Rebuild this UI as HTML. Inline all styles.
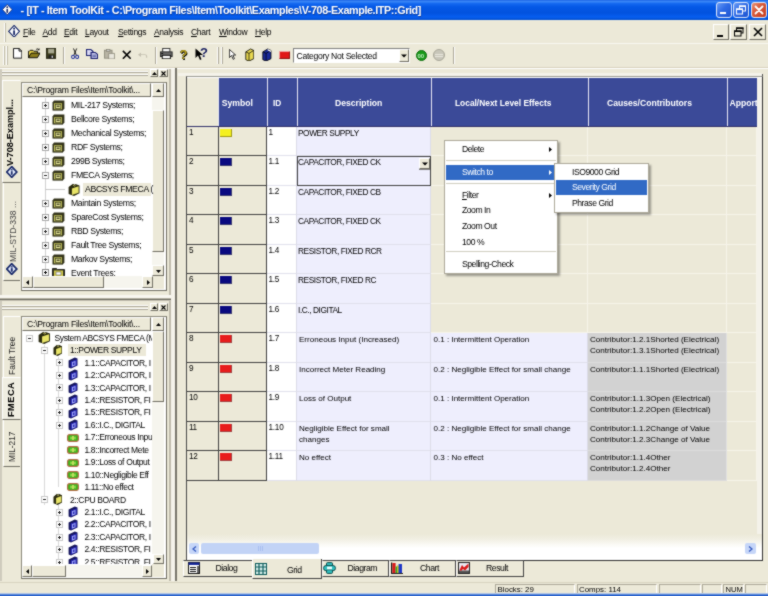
<!DOCTYPE html><html><head><meta charset="utf-8"><title>IT - Item ToolKit</title><style>
*{box-sizing:border-box;margin:0;padding:0}
html,body{width:768px;height:596px;overflow:hidden;background:#ece9d8}
#root{position:absolute;left:0;top:0;width:768px;height:596px;overflow:hidden;background:#ece9d8;filter:url(#soft)}
body{position:relative;font-family:"Liberation Sans",sans-serif;font-size:8px;color:#000}
.a{position:absolute}
.t{position:absolute;white-space:pre;line-height:10px;height:10px}
.b{font-weight:bold}
.rot{position:absolute;white-space:pre;transform-origin:0 0;transform:rotate(-90deg);line-height:10px;height:10px}
.btn{position:absolute;background:#ece9d8;border:1px solid;border-color:#fff #716f64 #716f64 #fff}
.sunk{position:absolute;border:1px solid;border-color:#808080 #fff #fff #808080}
u{text-decoration:underline}
</style></head><body><svg width="0" height="0" style="position:absolute"><filter id="soft" x="0" y="0" width="100%" height="100%" color-interpolation-filters="sRGB"><feConvolveMatrix order="3" kernelMatrix="1 2 1 2 14 2 1 2 1" edgeMode="duplicate" preserveAlpha="false"/></filter></svg><div id="root">
<div class="a" style="left:0;top:0;width:768px;height:20px;background:linear-gradient(#1c64e4 0%,#3a88f8 8%,#1468f0 18%,#0458e6 35%,#0252de 65%,#065ef0 85%,#0450d0 100%)"></div>
<svg class="a" style="left:2px;top:3.8px" width="10.5" height="11.2" viewBox="0 0 13 14"><polygon points="6.5,0.5 12.5,7 6.5,13.5 0.5,7" fill="#fff" stroke="#1a2a6a" stroke-width="1"/><rect x="5.5" y="3" width="2" height="2" fill="#1a2a6a"/><rect x="5.5" y="6" width="2" height="5" fill="#1a2a6a"/></svg>
<div class="t" style="left:20.6px;top:4px;font-size:10.8px;color:#fff;font-weight:bold;line-height:12px;height:12px;text-shadow:0.5px 0.5px 0 #0a3a9a;letter-spacing:-0.405px;">- [IT - Item ToolKit - C:\Program Files\Item\Toolkit\Examples\V-708-Example.ITP::Grid]</div>
<div class="a" style="left:716px;top:2px;width:16px;height:16px;border:1px solid #dfe8fb;border-radius:3px;background:linear-gradient(135deg,#6a9cf5 0%,#2f6be6 45%,#1f55d0 100%)"></div>
<div class="a" style="left:733px;top:2px;width:16px;height:16px;border:1px solid #dfe8fb;border-radius:3px;background:linear-gradient(135deg,#6a9cf5 0%,#2f6be6 45%,#1f55d0 100%)"></div>
<div class="a" style="left:751px;top:2px;width:16px;height:16px;border:1px solid #dfe8fb;border-radius:3px;background:linear-gradient(135deg,#e8957a 0%,#d85a3a 40%,#c63d1d 100%)"></div>
<div class="a" style="left:720px;top:12px;width:6px;height:2px;background:#fff;"></div>
<svg class="a" style="left:736px;top:5px" width="10" height="10" viewBox="0 0 10 10"><rect x="3.5" y="1" width="6" height="5" fill="none" stroke="#fff" stroke-width="1"/><rect x="3" y="0.5" width="7" height="1.5" fill="#fff"/><rect x="0.5" y="4" width="6" height="5" fill="#2f6be6" stroke="#fff" stroke-width="1"/><rect x="0" y="3.5" width="7" height="1.5" fill="#fff"/></svg>
<svg class="a" style="left:754px;top:5px" width="10" height="10" viewBox="0 0 10 10"><path d="M1.5 1.5 L8.5 8.5 M8.5 1.5 L1.5 8.5" stroke="#fff" stroke-width="1.8" stroke-linecap="round"/></svg>
<div class="a" style="left:0px;top:20px;width:768px;height:24px;background:#ece9d8;"></div>
<div class="a" style="left:0px;top:43px;width:768px;height:1px;background:#f8f7f1;"></div>
<div class="a" style="left:4px;top:23px;width:1px;height:19px;background:#fff;"></div>
<div class="a" style="left:5px;top:23px;width:1px;height:19px;background:#c0bca8;"></div>
<svg class="a" style="left:7.6px;top:24.6px" width="12.2" height="12.6" viewBox="0 0 13 14"><polygon points="6.5,0.5 12.5,7 6.5,13.5 0.5,7" fill="#fff" stroke="#1a2a6a" stroke-width="1.3"/><rect x="5.5" y="3" width="2" height="2" fill="#1a2a6a"/><rect x="5.5" y="6" width="2" height="5" fill="#1a2a6a"/></svg>
<div class="t" style="left:23px;top:26.8px;font-size:8.5px;letter-spacing:-0.315px;"><u>F</u>ile</div>
<div class="t" style="left:42.5px;top:26.8px;font-size:8.5px;letter-spacing:-0.315px;"><u>A</u>dd</div>
<div class="t" style="left:64px;top:26.8px;font-size:8.5px;letter-spacing:-0.315px;"><u>E</u>dit</div>
<div class="t" style="left:85px;top:26.8px;font-size:8.5px;letter-spacing:-0.315px;"><u>L</u>ayout</div>
<div class="t" style="left:118px;top:26.8px;font-size:8.5px;letter-spacing:-0.315px;"><u>S</u>ettings</div>
<div class="t" style="left:154px;top:26.8px;font-size:8.5px;letter-spacing:-0.315px;"><u>A</u>nalysis</div>
<div class="t" style="left:191px;top:26.8px;font-size:8.5px;letter-spacing:-0.315px;"><u>C</u>hart</div>
<div class="t" style="left:219px;top:26.8px;font-size:8.5px;letter-spacing:-0.315px;"><u>W</u>indow</div>
<div class="t" style="left:255px;top:26.8px;font-size:8.5px;letter-spacing:-0.315px;"><u>H</u>elp</div>
<div class="btn" style="left:712.6px;top:24px;width:16px;height:15.6px"></div>
<div class="btn" style="left:730.4px;top:24px;width:16.4px;height:15.6px"></div>
<div class="btn" style="left:748.6px;top:24px;width:17.2px;height:15.6px"></div>
<div class="a" style="left:717px;top:35px;width:6px;height:2px;background:#000;"></div>
<svg class="a" style="left:734px;top:27px" width="10" height="10" viewBox="0 0 10 10"><rect x="2.5" y="1" width="6.5" height="5" fill="none" stroke="#000" stroke-width="1"/><rect x="2" y="0.5" width="7.5" height="1.5" fill="#000"/><rect x="0.5" y="4" width="6.5" height="5" fill="#ece9d8" stroke="#000" stroke-width="1"/><rect x="0" y="3.5" width="7.5" height="1.5" fill="#000"/></svg>
<svg class="a" style="left:753px;top:27px" width="10" height="10" viewBox="0 0 10 10"><path d="M1 1 L9 9 M9 1 L1 9" stroke="#000" stroke-width="1.6"/></svg>
<div class="a" style="left:0px;top:44px;width:768px;height:24px;background:#ece9d8;"></div>
<div class="a" style="left:0px;top:67px;width:768px;height:1px;background:#d8d2bd;"></div>
<div class="a" style="left:0px;top:68px;width:768px;height:1px;background:#fff;"></div>
<div class="a" style="left:3px;top:46px;width:1px;height:19px;background:#fff;"></div>
<div class="a" style="left:4px;top:46px;width:1px;height:19px;background:#c0bca8;"></div>
<div class="a" style="left:6px;top:46px;width:1px;height:19px;background:#fff;"></div>
<div class="a" style="left:7px;top:46px;width:1px;height:19px;background:#c0bca8;"></div>
<div class="a" style="left:217px;top:47px;width:1px;height:17px;background:#fff;"></div>
<div class="a" style="left:218px;top:47px;width:1px;height:17px;background:#aca899;"></div>
<div class="a" style="left:221px;top:47px;width:1px;height:17px;background:#fff;"></div>
<div class="a" style="left:222px;top:47px;width:1px;height:17px;background:#aca899;"></div>
<div class="a" style="left:63px;top:47px;width:1px;height:17px;background:#aca899;"></div>
<div class="a" style="left:64px;top:47px;width:1px;height:17px;background:#fff;"></div>
<div class="a" style="left:155px;top:47px;width:1px;height:17px;background:#aca899;"></div>
<div class="a" style="left:156px;top:47px;width:1px;height:17px;background:#fff;"></div>
<div class="a" style="left:453px;top:47px;width:1px;height:17px;background:#aca899;"></div>
<div class="a" style="left:454px;top:47px;width:1px;height:17px;background:#fff;"></div>
<svg class="a" style="left:12.5px;top:48.2px" width="9.3" height="10.6" viewBox="0 0 10 12" preserveAspectRatio="none"><path d="M0.5 0.5 H6.5 L9.5 3.5 V11.5 H0.5 Z" fill="#fff" stroke="#000"/><path d="M6.5 0.5 V3.5 H9.5" fill="none" stroke="#000"/></svg>
<svg class="a" style="left:27.8px;top:48.4px" width="12.5" height="10.2" viewBox="0 0 14 11" preserveAspectRatio="none"><path d="M0.5 10.5 V3.5 H1.5 L2.5 2.5 H5.5 L6.5 3.5 H10.5 V5.5" fill="#e8d24a" stroke="#000"/><path d="M0.5 10.5 L3.5 5.5 H13.5 L10.5 10.5 Z" fill="#8a7a1a" stroke="#000"/><path d="M9 1.5 Q11 0 12.5 2 M12.5 2 l-2 0 m2 0 l0 -1.5" fill="none" stroke="#000" stroke-width=".8"/></svg>
<svg class="a" style="left:45.8px;top:48.3px" width="10.4" height="10.8" viewBox="0 0 12 12" preserveAspectRatio="none"><rect x="0.5" y="0.5" width="11" height="11" fill="#3c3c1c" stroke="#1c1c0c"/><rect x="2.5" y="1" width="7" height="5" fill="#a8a890"/><rect x="3" y="8" width="6" height="3.5" fill="#222"/><rect x="6.5" y="8.5" width="1.5" height="2.5" fill="#ddd"/></svg>
<svg class="a" style="left:70.8px;top:48.3px" width="8.2" height="11.6" viewBox="0 0 10 13" preserveAspectRatio="none"><path d="M3 0.5 L6.5 8 M7 0.5 L3.5 8" stroke="#000" stroke-width="1" fill="none"/><circle cx="2.5" cy="10" r="1.8" fill="none" stroke="#1a2a9a" stroke-width="1.2"/><circle cx="7.5" cy="10" r="1.8" fill="none" stroke="#1a2a9a" stroke-width="1.2"/></svg>
<svg class="a" style="left:86px;top:48.8px" width="12" height="10" viewBox="0 0 13 13" preserveAspectRatio="none"><path d="M0.5 0.5 H5 L7.5 3 V8.5 H0.5 Z" fill="#d8d8f4" stroke="#1a2070" stroke-width="1.3"/><path d="M5.5 4.5 H10 L12.5 7 V12.5 H5.5 Z" fill="#c8c8ee" stroke="#1a2070" stroke-width="1.3"/><path d="M7 8 H11 M7 10 H11" stroke="#1a2a7a" stroke-width=".8"/></svg>
<svg class="a" style="left:103.5px;top:48.8px" width="11" height="10.4" viewBox="0 0 13 13" preserveAspectRatio="none"><rect x="0.5" y="1.5" width="9" height="10" fill="#b8b4a4" stroke="#8a8878"/><rect x="3" y="0.5" width="4" height="2.5" fill="#ccc" stroke="#8a8878"/><path d="M5.5 5.5 H12.5 V12.5 H5.5 Z" fill="#e8e6dc" stroke="#8a8878"/></svg>
<svg class="a" style="left:121.5px;top:49.5px" width="9.6" height="9.6" viewBox="0 0 11 11" preserveAspectRatio="none"><path d="M1 1 L10 10 M10 1 L1 10" stroke="#000" stroke-width="1.8"/></svg>
<svg class="a" style="left:138px;top:51.5px" width="9.5" height="6" viewBox="0 0 11 8" preserveAspectRatio="none"><path d="M1 3.5 H8 Q10 3.5 10 6 V7.5" fill="none" stroke="#c4c0b0" stroke-width="1.3"/><path d="M0 3.5 L3.5 0.5 V6.5 Z" fill="#c4c0b0"/></svg>
<svg class="a" style="left:160.3px;top:48px" width="12.6" height="11.2" viewBox="0 0 14 13" preserveAspectRatio="none"><rect x="3" y="0.5" width="8" height="4.5" fill="#fff" stroke="#222"/><rect x="0.5" y="4.5" width="13" height="5.5" fill="#666" stroke="#222"/><rect x="2.5" y="8.5" width="9" height="4" fill="#fff" stroke="#000"/><rect x="1.5" y="6" width="2" height="1" fill="#000"/></svg>
<div class="t" style="left:179.8px;top:46.5px;font-size:12.5px;color:#b8a018;font-weight:bold;line-height:16px;height:16px;text-shadow:0.6px 0.6px 0 #000,-0.4px -0.4px 0 #000;">?</div>
<svg class="a" style="left:195px;top:48px" width="9" height="13" viewBox="0 0 9 13" preserveAspectRatio="none"><path d="M0.5 0.5 V10 L3 7.5 L5 12 L6.5 11.3 L4.7 7 H8 Z" fill="#000"/></svg>
<div class="t" style="left:200px;top:46px;font-size:13px;color:#1a2060;font-weight:bold;line-height:14px;height:14px;">?</div>
<svg class="a" style="left:229.3px;top:48.8px" width="7.5" height="11.2" viewBox="0 0 9 13" preserveAspectRatio="none"><path d="M0.5 0.5 V10 L3 7.5 L5 12 L6.5 11.3 L4.7 7 H8 Z" fill="#fff" stroke="#000" stroke-width=".9"/></svg>
<svg class="a" style="left:244.6px;top:47.8px" width="9.6" height="13.6" viewBox="0 0 12 14" preserveAspectRatio="none"><path d="M1 4 L7 1 L11 2.5 V11 L5 13.5 L1 12 Z" fill="#e8d850" stroke="#000" stroke-width=".9"/><path d="M1 4 L5 5.5 L11 2.5 M5 5.5 V13.5" fill="none" stroke="#000" stroke-width=".8"/></svg>
<svg class="a" style="left:261.8px;top:47.8px" width="9.8" height="13.6" viewBox="0 0 12 14" preserveAspectRatio="none"><path d="M1 4 L7 1 L11 2.5 V11 L5 13.5 L1 12 Z" fill="#1a2a9a" stroke="#000" stroke-width=".9"/><path d="M1 4 L5 5.5 L11 2.5 M5 5.5 V13.5" fill="none" stroke="#000" stroke-width=".8"/><path d="M7 1 L11 2.5 L11 4 L7 2.5Z" fill="#fff"/></svg>
<div class="a" style="left:279px;top:51.4px;width:11px;height:7.2px;background:#e01818;border:1px solid #f0a0a0;border-right-color:#901010;border-bottom-color:#901010;border-radius:1px"></div>
<div class="a" style="left:293px;top:47.5px;width:117px;height:15.6px;background:#fff;border:1px solid;border-color:#808080 #fff #fff #808080"></div>
<div class="t" style="left:296.5px;top:50.6px;font-size:8.6px;letter-spacing:-0.296px;">Category Not Selected</div>
<div class="btn" style="left:399px;top:49px;width:10px;height:13px"></div>
<svg class="a" style="left:401px;top:54px" width="6" height="4" viewBox="0 0 6 4" preserveAspectRatio="none"><path d="M0 0.5 H6 L3 3.5 Z" fill="#000"/></svg>
<div class="a" style="left:415.8px;top:49.6px;width:11px;height:11px;border-radius:6px;background:#1a9a1a;border:1px solid #0a6a0a"></div>
<div class="t" style="left:417.6px;top:50.6px;font-size:6px;color:#bfe8bf;font-weight:bold;letter-spacing:-0.3px">00</div>
<div class="a" style="left:433px;top:49px;width:12px;height:12px;border-radius:6px;background:#c8c6ba;border:1px solid #a8a698"></div>
<div class="a" style="left:435px;top:54px;width:8px;height:1px;background:#e8e6dc;"></div>
<div class="a" style="left:435px;top:56px;width:8px;height:1px;background:#e8e6dc;"></div>
<div class="a" style="left:0px;top:69px;width:2px;height:512px;background:#cfcbbd;"></div>
<div class="a" style="left:169px;top:69px;width:2px;height:512px;background:#c0bcac;"></div>
<div class="a" style="left:171px;top:69px;width:4px;height:512px;background:#f4f2ea;"></div>
<div class="a" style="left:175px;top:68px;width:2px;height:513px;background:#77756a;"></div>
<div class="a" style="left:0px;top:295px;width:171px;height:3px;background:#f8f6f0;"></div>
<div class="a" style="left:0px;top:298px;width:171px;height:1px;background:#b8b4a4;"></div>
<div class="a" style="left:0px;top:299px;width:171px;height:1px;background:#6e6c62;"></div>
<div class="a" style="left:0px;top:300px;width:171px;height:1px;background:#c8c4b6;"></div>
<div class="a" style="left:2px;top:71px;width:146px;height:1px;background:#fff;"></div>
<div class="a" style="left:2px;top:72px;width:146px;height:1px;background:#aca899;"></div>
<div class="a" style="left:2px;top:74px;width:146px;height:1px;background:#fff;"></div>
<div class="a" style="left:2px;top:75px;width:146px;height:1px;background:#aca899;"></div>
<div class="btn" style="left:150px;top:69px;width:8px;height:8px"></div>
<svg class="a" style="left:151.5px;top:71.5px" width="5" height="3" viewBox="0 0 5 3" preserveAspectRatio="none"><path d="M0 3 L2.5 0 L5 3 Z" fill="#000"/></svg>
<div class="btn" style="left:159px;top:69px;width:9px;height:8px"></div>
<svg class="a" style="left:161px;top:70.5px" width="5" height="5" viewBox="0 0 5 5" preserveAspectRatio="none"><path d="M0.5 0.5 L4.5 4.5 M4.5 0.5 L0.5 4.5" stroke="#000" stroke-width="1.1"/></svg>
<div class="a" style="left:2px;top:80px;width:19px;height:103px;background:#ece9d8;border:1px solid;border-color:#fff transparent #716f64 #fff"></div>
<div class="a" style="left:3px;top:183px;width:17px;height:98px;border-bottom:1px solid #716f64;border-left:1px solid #fff"></div>
<div class="rot b" style="left:5px;top:165.5px;font-size:9.1px;line-height:11px;height:11px">V-708-Exampl...</div>
<svg class="a" style="left:6px;top:166px" width="11.5" height="12" viewBox="0 0 13 15" preserveAspectRatio="none"><polygon points="6.5,0.8 12.2,7.5 6.5,14.2 0.8,7.5" fill="#e8f0ff" stroke="#1a2a6a" stroke-width="2"/><rect x="5.5" y="4" width="2" height="1.6" fill="#1a2a6a"/><rect x="5.5" y="6.5" width="2" height="4.5" fill="#1a2a6a"/></svg>
<div class="rot" style="left:7.5px;top:262px;font-size:8.6px;color:#444">MIL-STD-338 ...</div>
<svg class="a" style="left:6px;top:262.5px" width="11.5" height="12" viewBox="0 0 12 14" preserveAspectRatio="none"><polygon points="6,0.8 11.2,7 6,13.2 0.8,7" fill="#e8f0ff" stroke="#1a2a6a" stroke-width="2"/><rect x="5" y="3.8" width="2" height="1.5" fill="#1a2a6a"/><rect x="5" y="6" width="2" height="4.2" fill="#1a2a6a"/></svg>
<div class="a" style="left:21px;top:82px;width:146px;height:209px;border:1px solid;border-color:#8a887a #6e6c62 #6e6c62 #8a887a;background:#fff"></div>
<div class="btn" style="left:22px;top:83px;width:129px;height:14px"></div>
<div class="t" style="left:27px;top:85.3px;font-size:8.6px;letter-spacing:-0.214px;">C:\Program Files\Item\Toolkit\...</div>
<div class="btn" style="left:152px;top:83px;width:12px;height:14px"></div>
<svg class="a" style="left:155.5px;top:88.5px" width="5" height="3" viewBox="0 0 5 3" preserveAspectRatio="none"><path d="M0 3 L2.5 0 L5 3 Z" fill="#000"/></svg>
<div class="a" style="left:152px;top:97px;width:12px;height:168px;background:#f6f5ee;"></div>
<div class="btn" style="left:152px;top:110px;width:12px;height:142px"></div>
<div class="btn" style="left:152px;top:265px;width:12px;height:11px"></div>
<svg class="a" style="left:155.5px;top:269.5px" width="5" height="3" viewBox="0 0 5 3" preserveAspectRatio="none"><path d="M0 0 L5 0 L2.5 3 Z" fill="#000"/></svg>
<div class="a" style="left:45px;top:98px;width:1px;height:178px;background:#d0d0d0;"></div>
<div class="a" style="left:42px;top:102px;width:7px;height:7px;background:#fff;border:1px solid #a8a8a8"></div>
<div class="a" style="left:44px;top:105px;width:3px;height:1px;background:#222;"></div>
<div class="a" style="left:45px;top:104px;width:1px;height:3px;background:#222;"></div>
<svg class="a" style="left:52px;top:100.25px" width="13" height="11" viewBox="0 0 13 11" preserveAspectRatio="none"><path d="M0.5 2.5 L2 0.6 H12.4 V8.5 L10.8 10.5 H0.5 Z" fill="#33331a"/><rect x="1.6" y="2.8" width="9" height="7" fill="#c4c45c" stroke="#2a2a14" stroke-width=".8"/><rect x="3.4" y="4.3" width="5.4" height="4" fill="#f0f0a0" stroke="#3a3a20" stroke-width=".7"/><rect x="4.6" y="5.6" width="3" height="1.3" fill="#3a3a20"/></svg>
<div class="t" style="left:71px;top:100.45px;font-size:8.7px;letter-spacing:-0.369px;">MIL-217 Systems;</div>
<div class="a" style="left:42px;top:116px;width:7px;height:7px;background:#fff;border:1px solid #a8a8a8"></div>
<div class="a" style="left:44px;top:119px;width:3px;height:1px;background:#222;"></div>
<div class="a" style="left:45px;top:118px;width:1px;height:3px;background:#222;"></div>
<svg class="a" style="left:52px;top:114.19px" width="13" height="11" viewBox="0 0 13 11" preserveAspectRatio="none"><path d="M0.5 2.5 L2 0.6 H12.4 V8.5 L10.8 10.5 H0.5 Z" fill="#33331a"/><rect x="1.6" y="2.8" width="9" height="7" fill="#c4c45c" stroke="#2a2a14" stroke-width=".8"/><rect x="3.4" y="4.3" width="5.4" height="4" fill="#f0f0a0" stroke="#3a3a20" stroke-width=".7"/><rect x="4.6" y="5.6" width="3" height="1.3" fill="#3a3a20"/></svg>
<div class="t" style="left:71px;top:114.39px;font-size:8.7px;letter-spacing:-0.369px;">Bellcore Systems;</div>
<div class="a" style="left:42px;top:130px;width:7px;height:7px;background:#fff;border:1px solid #a8a8a8"></div>
<div class="a" style="left:44px;top:133px;width:3px;height:1px;background:#222;"></div>
<div class="a" style="left:45px;top:132px;width:1px;height:3px;background:#222;"></div>
<svg class="a" style="left:52px;top:128.13px" width="13" height="11" viewBox="0 0 13 11" preserveAspectRatio="none"><path d="M0.5 2.5 L2 0.6 H12.4 V8.5 L10.8 10.5 H0.5 Z" fill="#33331a"/><rect x="1.6" y="2.8" width="9" height="7" fill="#c4c45c" stroke="#2a2a14" stroke-width=".8"/><rect x="3.4" y="4.3" width="5.4" height="4" fill="#f0f0a0" stroke="#3a3a20" stroke-width=".7"/><rect x="4.6" y="5.6" width="3" height="1.3" fill="#3a3a20"/></svg>
<div class="t" style="left:71px;top:128.32999999999998px;font-size:8.7px;letter-spacing:-0.369px;">Mechanical Systems;</div>
<div class="a" style="left:42px;top:144px;width:7px;height:7px;background:#fff;border:1px solid #a8a8a8"></div>
<div class="a" style="left:44px;top:147px;width:3px;height:1px;background:#222;"></div>
<div class="a" style="left:45px;top:146px;width:1px;height:3px;background:#222;"></div>
<svg class="a" style="left:52px;top:142.07px" width="13" height="11" viewBox="0 0 13 11" preserveAspectRatio="none"><path d="M0.5 2.5 L2 0.6 H12.4 V8.5 L10.8 10.5 H0.5 Z" fill="#33331a"/><rect x="1.6" y="2.8" width="9" height="7" fill="#c4c45c" stroke="#2a2a14" stroke-width=".8"/><rect x="3.4" y="4.3" width="5.4" height="4" fill="#f0f0a0" stroke="#3a3a20" stroke-width=".7"/><rect x="4.6" y="5.6" width="3" height="1.3" fill="#3a3a20"/></svg>
<div class="t" style="left:71px;top:142.26999999999998px;font-size:8.7px;letter-spacing:-0.369px;">RDF Systems;</div>
<div class="a" style="left:42px;top:158px;width:7px;height:7px;background:#fff;border:1px solid #a8a8a8"></div>
<div class="a" style="left:44px;top:161px;width:3px;height:1px;background:#222;"></div>
<div class="a" style="left:45px;top:160px;width:1px;height:3px;background:#222;"></div>
<svg class="a" style="left:52px;top:156.01px" width="13" height="11" viewBox="0 0 13 11" preserveAspectRatio="none"><path d="M0.5 2.5 L2 0.6 H12.4 V8.5 L10.8 10.5 H0.5 Z" fill="#33331a"/><rect x="1.6" y="2.8" width="9" height="7" fill="#c4c45c" stroke="#2a2a14" stroke-width=".8"/><rect x="3.4" y="4.3" width="5.4" height="4" fill="#f0f0a0" stroke="#3a3a20" stroke-width=".7"/><rect x="4.6" y="5.6" width="3" height="1.3" fill="#3a3a20"/></svg>
<div class="t" style="left:71px;top:156.20999999999998px;font-size:8.7px;letter-spacing:-0.369px;">299B Systems;</div>
<div class="a" style="left:42px;top:172px;width:7px;height:7px;background:#fff;border:1px solid #a8a8a8"></div>
<div class="a" style="left:44px;top:175px;width:3px;height:1px;background:#222;"></div>
<svg class="a" style="left:52px;top:169.95px" width="13" height="11" viewBox="0 0 13 11" preserveAspectRatio="none"><path d="M0.5 2.5 L2 0.6 H12.4 V8.5 L10.8 10.5 H0.5 Z" fill="#33331a"/><rect x="1.6" y="2.8" width="9" height="7" fill="#c4c45c" stroke="#2a2a14" stroke-width=".8"/><rect x="3.4" y="4.3" width="5.4" height="4" fill="#f0f0a0" stroke="#3a3a20" stroke-width=".7"/><rect x="4.6" y="5.6" width="3" height="1.3" fill="#3a3a20"/></svg>
<div class="t" style="left:71px;top:170.14999999999998px;font-size:8.7px;letter-spacing:-0.369px;">FMECA Systems;</div>
<div class="a" style="left:45px;top:189px;width:20px;height:1px;background:#c8c8c8;"></div>
<div class="a" style="left:83px;top:183px;width:68px;height:13px;background:#ece9d8;"></div>
<svg class="a" style="left:67.5px;top:182.58999999999997px" width="12" height="13.5" viewBox="0 0 12 13" preserveAspectRatio="none"><path d="M0.6 3.8 L5 0.8 L6.6 1.7 L7.4 0.9 L11.5 2.4 V9.8 L6 12.5 L0.6 10.6 Z" fill="#2a2a10"/><path d="M3.9 5.2 L10.6 3.1 V9.3 L3.9 11.5 Z" fill="#e8e468"/><path d="M5 2 L6.6 2.9 L7.6 2 " fill="none" stroke="#e8e468" stroke-width=".7"/></svg>
<div class="t" style="left:85px;top:184.08999999999997px;font-size:8.7px;letter-spacing:-0.346px;">ABCSYS FMECA (</div>
<div class="a" style="left:42px;top:200px;width:7px;height:7px;background:#fff;border:1px solid #a8a8a8"></div>
<div class="a" style="left:44px;top:203px;width:3px;height:1px;background:#222;"></div>
<div class="a" style="left:45px;top:202px;width:1px;height:3px;background:#222;"></div>
<svg class="a" style="left:52px;top:197.82999999999998px" width="13" height="11" viewBox="0 0 13 11" preserveAspectRatio="none"><path d="M0.5 2.5 L2 0.6 H12.4 V8.5 L10.8 10.5 H0.5 Z" fill="#33331a"/><rect x="1.6" y="2.8" width="9" height="7" fill="#c4c45c" stroke="#2a2a14" stroke-width=".8"/><rect x="3.4" y="4.3" width="5.4" height="4" fill="#f0f0a0" stroke="#3a3a20" stroke-width=".7"/><rect x="4.6" y="5.6" width="3" height="1.3" fill="#3a3a20"/></svg>
<div class="t" style="left:71px;top:198.02999999999997px;font-size:8.7px;letter-spacing:-0.369px;">Maintain Systems;</div>
<div class="a" style="left:42px;top:214px;width:7px;height:7px;background:#fff;border:1px solid #a8a8a8"></div>
<div class="a" style="left:44px;top:217px;width:3px;height:1px;background:#222;"></div>
<div class="a" style="left:45px;top:216px;width:1px;height:3px;background:#222;"></div>
<svg class="a" style="left:52px;top:211.76999999999998px" width="13" height="11" viewBox="0 0 13 11" preserveAspectRatio="none"><path d="M0.5 2.5 L2 0.6 H12.4 V8.5 L10.8 10.5 H0.5 Z" fill="#33331a"/><rect x="1.6" y="2.8" width="9" height="7" fill="#c4c45c" stroke="#2a2a14" stroke-width=".8"/><rect x="3.4" y="4.3" width="5.4" height="4" fill="#f0f0a0" stroke="#3a3a20" stroke-width=".7"/><rect x="4.6" y="5.6" width="3" height="1.3" fill="#3a3a20"/></svg>
<div class="t" style="left:71px;top:211.96999999999997px;font-size:8.7px;letter-spacing:-0.369px;">SpareCost Systems;</div>
<div class="a" style="left:42px;top:228px;width:7px;height:7px;background:#fff;border:1px solid #a8a8a8"></div>
<div class="a" style="left:44px;top:231px;width:3px;height:1px;background:#222;"></div>
<div class="a" style="left:45px;top:230px;width:1px;height:3px;background:#222;"></div>
<svg class="a" style="left:52px;top:225.70999999999998px" width="13" height="11" viewBox="0 0 13 11" preserveAspectRatio="none"><path d="M0.5 2.5 L2 0.6 H12.4 V8.5 L10.8 10.5 H0.5 Z" fill="#33331a"/><rect x="1.6" y="2.8" width="9" height="7" fill="#c4c45c" stroke="#2a2a14" stroke-width=".8"/><rect x="3.4" y="4.3" width="5.4" height="4" fill="#f0f0a0" stroke="#3a3a20" stroke-width=".7"/><rect x="4.6" y="5.6" width="3" height="1.3" fill="#3a3a20"/></svg>
<div class="t" style="left:71px;top:225.90999999999997px;font-size:8.7px;letter-spacing:-0.369px;">RBD Systems;</div>
<div class="a" style="left:42px;top:242px;width:7px;height:7px;background:#fff;border:1px solid #a8a8a8"></div>
<div class="a" style="left:44px;top:245px;width:3px;height:1px;background:#222;"></div>
<div class="a" style="left:45px;top:244px;width:1px;height:3px;background:#222;"></div>
<svg class="a" style="left:52px;top:239.65px" width="13" height="11" viewBox="0 0 13 11" preserveAspectRatio="none"><path d="M0.5 2.5 L2 0.6 H12.4 V8.5 L10.8 10.5 H0.5 Z" fill="#33331a"/><rect x="1.6" y="2.8" width="9" height="7" fill="#c4c45c" stroke="#2a2a14" stroke-width=".8"/><rect x="3.4" y="4.3" width="5.4" height="4" fill="#f0f0a0" stroke="#3a3a20" stroke-width=".7"/><rect x="4.6" y="5.6" width="3" height="1.3" fill="#3a3a20"/></svg>
<div class="t" style="left:71px;top:239.85px;font-size:8.7px;letter-spacing:-0.369px;">Fault Tree Systems;</div>
<div class="a" style="left:42px;top:256px;width:7px;height:7px;background:#fff;border:1px solid #a8a8a8"></div>
<div class="a" style="left:44px;top:259px;width:3px;height:1px;background:#222;"></div>
<div class="a" style="left:45px;top:258px;width:1px;height:3px;background:#222;"></div>
<svg class="a" style="left:52px;top:253.59000000000003px" width="13" height="11" viewBox="0 0 13 11" preserveAspectRatio="none"><path d="M0.5 2.5 L2 0.6 H12.4 V8.5 L10.8 10.5 H0.5 Z" fill="#33331a"/><rect x="1.6" y="2.8" width="9" height="7" fill="#c4c45c" stroke="#2a2a14" stroke-width=".8"/><rect x="3.4" y="4.3" width="5.4" height="4" fill="#f0f0a0" stroke="#3a3a20" stroke-width=".7"/><rect x="4.6" y="5.6" width="3" height="1.3" fill="#3a3a20"/></svg>
<div class="t" style="left:71px;top:253.79000000000002px;font-size:8.7px;letter-spacing:-0.369px;">Markov Systems;</div>
<div class="a" style="left:40px;top:266.03px;width:111px;height:9.970000000000027px;overflow:hidden">
<div class="a" style="left:2px;top:3px;width:7px;height:7px;background:#fff;border:1px solid #8a8a8a"></div><div class="a" style="left:4px;top:6px;width:3px;height:1px;background:#000"></div><div class="a" style="left:5px;top:5px;width:1px;height:3px;background:#000"></div>
<svg class="a" style="left:12px;top:1px" width="13" height="11" viewBox="0 0 13 11"><path d="M0.5 10.5 V1.5 H4.5 L5.5 2.5 H12.5 V10.5 Z" fill="#3a3a20" stroke="#222"/><rect x="2" y="3.5" width="9" height="6" fill="#d8d050"/><rect x="4" y="5" width="5" height="3" fill="#fff" stroke="#555" stroke-width=".6"/></svg>
<div class="t" style="left:31px;top:1.8px;font-size:8.5px;letter-spacing:-0.27px">Event Trees;</div></div>
<div class="a" style="left:22px;top:276px;width:142px;height:12px;background:#f6f5ee;"></div>
<div class="btn" style="left:22px;top:276px;width:11px;height:12px"></div>
<svg class="a" style="left:26px;top:279.5px" width="3" height="5" viewBox="0 0 3 5" preserveAspectRatio="none"><path d="M3 0 L3 5 L0 2.5 Z" fill="#000"/></svg>
<div class="btn" style="left:33px;top:276px;width:71px;height:12px"></div>
<div class="btn" style="left:142px;top:276px;width:11px;height:12px"></div>
<svg class="a" style="left:146.5px;top:279.5px" width="3" height="5" viewBox="0 0 3 5" preserveAspectRatio="none"><path d="M0 0 L0 5 L3 2.5 Z" fill="#000"/></svg>
<div class="a" style="left:153px;top:276px;width:11px;height:13px;background:#ece9d8;"></div>
<div class="a" style="left:2px;top:305px;width:146px;height:1px;background:#fff;"></div>
<div class="a" style="left:2px;top:306px;width:146px;height:1px;background:#aca899;"></div>
<div class="a" style="left:2px;top:308px;width:146px;height:1px;background:#fff;"></div>
<div class="a" style="left:2px;top:309px;width:146px;height:1px;background:#aca899;"></div>
<div class="btn" style="left:150px;top:303px;width:8px;height:8px"></div>
<svg class="a" style="left:151.5px;top:305.5px" width="5" height="3" viewBox="0 0 5 3" preserveAspectRatio="none"><path d="M0 3 L2.5 0 L5 3 Z" fill="#000"/></svg>
<div class="btn" style="left:159px;top:303px;width:9px;height:8px"></div>
<svg class="a" style="left:161px;top:304.5px" width="5" height="5" viewBox="0 0 5 5" preserveAspectRatio="none"><path d="M0.5 0.5 L4.5 4.5 M4.5 0.5 L0.5 4.5" stroke="#000" stroke-width="1.1"/></svg>
<div class="a" style="left:3px;top:316px;width:17px;height:61px;border-left:1px solid #fff;border-top:1px solid #fff"></div>
<div class="rot" style="left:7px;top:374.5px;font-size:8.5px;color:#222">Fault Tree</div>
<div class="a" style="left:2px;top:377px;width:19px;height:43px;background:#f0eee2;border:1px solid;border-color:#fff transparent #716f64 #fff"></div>
<div class="rot b" style="left:6px;top:417px;font-size:9.2px;letter-spacing:0.5px;line-height:11px;height:11px">FMECA</div>
<div class="a" style="left:3px;top:420px;width:17px;height:47px;border-left:1px solid #fff;border-bottom:1px solid #716f64"></div>
<div class="rot" style="left:7px;top:461.5px;font-size:8.3px;color:#222">MIL-217</div>
<div class="a" style="left:21px;top:316px;width:146px;height:263px;border:1px solid;border-color:#8a887a #6e6c62 #6e6c62 #8a887a;background:#fff"></div>
<div class="btn" style="left:22px;top:317px;width:129px;height:14px"></div>
<div class="t" style="left:27px;top:319.3px;font-size:8.6px;letter-spacing:-0.214px;">C:\Program Files\Item\Toolkit\...</div>
<div class="btn" style="left:152px;top:317px;width:12px;height:14px"></div>
<svg class="a" style="left:155.5px;top:322.5px" width="5" height="3" viewBox="0 0 5 3" preserveAspectRatio="none"><path d="M0 3 L2.5 0 L5 3 Z" fill="#000"/></svg>
<div class="a" style="left:152px;top:331px;width:12px;height:223px;background:#f6f5ee;"></div>
<div class="btn" style="left:152px;top:331px;width:12px;height:71px"></div>
<div class="btn" style="left:153px;top:554px;width:11px;height:10px"></div>
<svg class="a" style="left:156px;top:557.5px" width="5" height="3" viewBox="0 0 5 3" preserveAspectRatio="none"><path d="M0 0 L5 0 L2.5 3 Z" fill="#000"/></svg>
<div class="a" style="left:22px;top:331px;width:130px;height:233px;overflow:hidden">
<div class="a" style="left:22px;top:14px;width:1px;height:160px;background:#d8d8d8;"></div>
<div class="a" style="left:36px;top:26px;width:1px;height:130px;background:#d8d8d8;"></div>
<div class="a" style="left:36px;top:174px;width:1px;height:60px;background:#d8d8d8;"></div>
<div class="a" style="left:4px;top:4px;width:7px;height:7px;background:#fff;border:1px solid #c8c8c8"></div>
<div class="a" style="left:6px;top:7px;width:3px;height:1px;background:#222;"></div>
<svg class="a" style="left:15.5px;top:0.20000000000000018px" width="12.5" height="13.5" viewBox="0 0 12 13" preserveAspectRatio="none"><path d="M0.6 3.8 L5 0.8 L6.6 1.7 L7.4 0.9 L11.5 2.4 V9.8 L6 12.5 L0.6 10.6 Z" fill="#2a2a10"/><path d="M3.9 5.2 L10.6 3.1 V9.3 L3.9 11.5 Z" fill="#e8e468"/><path d="M5 2 L6.6 2.9 L7.6 2 " fill="none" stroke="#e8e468" stroke-width=".7"/></svg>
<div class="t" style="left:32.5px;top:1.7000000000000002px;font-size:8.5px;letter-spacing:-0.360px;">System ABCSYS FMECA (M</div>
<div class="a" style="left:19px;top:16px;width:7px;height:7px;background:#fff;border:1px solid #c8c8c8"></div>
<div class="a" style="left:21px;top:19px;width:3px;height:1px;background:#222;"></div>
<svg class="a" style="left:30.5px;top:13.049999999999988px" width="9.5" height="12.5" viewBox="0 0 12 13" preserveAspectRatio="none"><path d="M0.6 3.8 L5 0.8 L6.6 1.7 L7.4 0.9 L11.5 2.4 V9.8 L6 12.5 L0.6 10.6 Z" fill="#2a2a10"/><path d="M3.9 5.2 L10.6 3.1 V9.3 L3.9 11.5 Z" fill="#e8e468"/><path d="M5 2 L6.6 2.9 L7.6 2 " fill="none" stroke="#e8e468" stroke-width=".7"/></svg>
<div class="a" style="left:46px;top:13.449999999999989px;width:78px;height:12px;background:#ece9d8;"></div>
<div class="t" style="left:48px;top:14.149999999999988px;font-size:8.5px;letter-spacing:-0.360px;">1::POWER SUPPLY</div>
<div class="a" style="left:34px;top:28px;width:7px;height:7px;background:#fff;border:1px solid #c8c8c8"></div>
<div class="a" style="left:36px;top:31px;width:3px;height:1px;background:#222;"></div>
<div class="a" style="left:37px;top:30px;width:1px;height:3px;background:#222;"></div>
<svg class="a" style="left:46.0px;top:25.899999999999977px" width="10" height="12" viewBox="0 0 10 12" preserveAspectRatio="none"><path d="M0.6 3.6 L6.8 0.6 L9.5 1.6 V8.6 L3 11.6 L0.6 10.4 Z" fill="#14145a"/><path d="M2.6 4.6 L8.8 2.2 V8.2 L2.6 10.8 Z" fill="#2828b4"/><rect x="4.4" y="5" width="2.6" height="3.4" fill="none" stroke="#b0b8ff" stroke-width=".9" transform="skewY(-20) translate(0,2.1)"/></svg>
<div class="t" style="left:62.5px;top:26.599999999999977px;font-size:8.5px;letter-spacing:-0.360px;">1.1::CAPACITOR, I</div>
<div class="a" style="left:34px;top:41px;width:7px;height:7px;background:#fff;border:1px solid #c8c8c8"></div>
<div class="a" style="left:36px;top:44px;width:3px;height:1px;background:#222;"></div>
<div class="a" style="left:37px;top:43px;width:1px;height:3px;background:#222;"></div>
<svg class="a" style="left:46.0px;top:38.35000000000002px" width="10" height="12" viewBox="0 0 10 12" preserveAspectRatio="none"><path d="M0.6 3.6 L6.8 0.6 L9.5 1.6 V8.6 L3 11.6 L0.6 10.4 Z" fill="#14145a"/><path d="M2.6 4.6 L8.8 2.2 V8.2 L2.6 10.8 Z" fill="#2828b4"/><rect x="4.4" y="5" width="2.6" height="3.4" fill="none" stroke="#b0b8ff" stroke-width=".9" transform="skewY(-20) translate(0,2.1)"/></svg>
<div class="t" style="left:62.5px;top:39.050000000000026px;font-size:8.5px;letter-spacing:-0.360px;">1.2::CAPACITOR, I</div>
<div class="a" style="left:34px;top:53px;width:7px;height:7px;background:#fff;border:1px solid #c8c8c8"></div>
<div class="a" style="left:36px;top:56px;width:3px;height:1px;background:#222;"></div>
<div class="a" style="left:37px;top:55px;width:1px;height:3px;background:#222;"></div>
<svg class="a" style="left:46.0px;top:50.80000000000001px" width="10" height="12" viewBox="0 0 10 12" preserveAspectRatio="none"><path d="M0.6 3.6 L6.8 0.6 L9.5 1.6 V8.6 L3 11.6 L0.6 10.4 Z" fill="#14145a"/><path d="M2.6 4.6 L8.8 2.2 V8.2 L2.6 10.8 Z" fill="#2828b4"/><rect x="4.4" y="5" width="2.6" height="3.4" fill="none" stroke="#b0b8ff" stroke-width=".9" transform="skewY(-20) translate(0,2.1)"/></svg>
<div class="t" style="left:62.5px;top:51.500000000000014px;font-size:8.5px;letter-spacing:-0.360px;">1.3::CAPACITOR, I</div>
<div class="a" style="left:34px;top:66px;width:7px;height:7px;background:#fff;border:1px solid #c8c8c8"></div>
<div class="a" style="left:36px;top:69px;width:3px;height:1px;background:#222;"></div>
<div class="a" style="left:37px;top:68px;width:1px;height:3px;background:#222;"></div>
<svg class="a" style="left:46.0px;top:63.25px" width="10" height="12" viewBox="0 0 10 12" preserveAspectRatio="none"><path d="M0.6 3.6 L6.8 0.6 L9.5 1.6 V8.6 L3 11.6 L0.6 10.4 Z" fill="#14145a"/><path d="M2.6 4.6 L8.8 2.2 V8.2 L2.6 10.8 Z" fill="#2828b4"/><rect x="4.4" y="5" width="2.6" height="3.4" fill="none" stroke="#b0b8ff" stroke-width=".9" transform="skewY(-20) translate(0,2.1)"/></svg>
<div class="t" style="left:62.5px;top:63.95px;font-size:8.5px;letter-spacing:-0.360px;">1.4::RESISTOR, FI</div>
<div class="a" style="left:34px;top:78px;width:7px;height:7px;background:#fff;border:1px solid #c8c8c8"></div>
<div class="a" style="left:36px;top:81px;width:3px;height:1px;background:#222;"></div>
<div class="a" style="left:37px;top:80px;width:1px;height:3px;background:#222;"></div>
<svg class="a" style="left:46.0px;top:75.69999999999999px" width="10" height="12" viewBox="0 0 10 12" preserveAspectRatio="none"><path d="M0.6 3.6 L6.8 0.6 L9.5 1.6 V8.6 L3 11.6 L0.6 10.4 Z" fill="#14145a"/><path d="M2.6 4.6 L8.8 2.2 V8.2 L2.6 10.8 Z" fill="#2828b4"/><rect x="4.4" y="5" width="2.6" height="3.4" fill="none" stroke="#b0b8ff" stroke-width=".9" transform="skewY(-20) translate(0,2.1)"/></svg>
<div class="t" style="left:62.5px;top:76.39999999999999px;font-size:8.5px;letter-spacing:-0.360px;">1.5::RESISTOR, FI</div>
<div class="a" style="left:34px;top:91px;width:7px;height:7px;background:#fff;border:1px solid #c8c8c8"></div>
<div class="a" style="left:36px;top:94px;width:3px;height:1px;background:#222;"></div>
<div class="a" style="left:37px;top:93px;width:1px;height:3px;background:#222;"></div>
<svg class="a" style="left:46.0px;top:88.14999999999998px" width="10" height="12" viewBox="0 0 10 12" preserveAspectRatio="none"><path d="M0.6 3.6 L6.8 0.6 L9.5 1.6 V8.6 L3 11.6 L0.6 10.4 Z" fill="#14145a"/><path d="M2.6 4.6 L8.8 2.2 V8.2 L2.6 10.8 Z" fill="#2828b4"/><rect x="4.4" y="5" width="2.6" height="3.4" fill="none" stroke="#b0b8ff" stroke-width=".9" transform="skewY(-20) translate(0,2.1)"/></svg>
<div class="t" style="left:62.5px;top:88.84999999999998px;font-size:8.5px;letter-spacing:-0.360px;">1.6::I.C., DIGITAL</div>
<svg class="a" style="left:44.5px;top:102.60000000000002px" width="12" height="8" viewBox="0 0 12 8" preserveAspectRatio="none"><rect x="0.6" y="0.6" width="10.8" height="6.8" rx="1.8" fill="#3cb41c" stroke="#b86a48" stroke-width="1.2"/><rect x="3" y="2.2" width="6" height="3.6" fill="#58c830"/><rect x="5.3" y="2" width="1.4" height="4" fill="#e0ec70"/><rect x="3.2" y="3.5" width="5.6" height="1" fill="#c8e060"/></svg>
<div class="t" style="left:62.5px;top:101.30000000000003px;font-size:8.5px;letter-spacing:-0.360px;">1.7::Erroneous Inpu</div>
<svg class="a" style="left:44.5px;top:115.05000000000001px" width="12" height="8" viewBox="0 0 12 8" preserveAspectRatio="none"><rect x="0.6" y="0.6" width="10.8" height="6.8" rx="1.8" fill="#3cb41c" stroke="#b86a48" stroke-width="1.2"/><rect x="3" y="2.2" width="6" height="3.6" fill="#58c830"/><rect x="5.3" y="2" width="1.4" height="4" fill="#e0ec70"/><rect x="3.2" y="3.5" width="5.6" height="1" fill="#c8e060"/></svg>
<div class="t" style="left:62.5px;top:113.75000000000001px;font-size:8.5px;letter-spacing:-0.360px;">1.8::Incorrect Mete</div>
<svg class="a" style="left:44.5px;top:127.5px" width="12" height="8" viewBox="0 0 12 8" preserveAspectRatio="none"><rect x="0.6" y="0.6" width="10.8" height="6.8" rx="1.8" fill="#3cb41c" stroke="#b86a48" stroke-width="1.2"/><rect x="3" y="2.2" width="6" height="3.6" fill="#58c830"/><rect x="5.3" y="2" width="1.4" height="4" fill="#e0ec70"/><rect x="3.2" y="3.5" width="5.6" height="1" fill="#c8e060"/></svg>
<div class="t" style="left:62.5px;top:126.2px;font-size:8.5px;letter-spacing:-0.360px;">1.9::Loss of Output</div>
<svg class="a" style="left:44.5px;top:139.95px" width="12" height="8" viewBox="0 0 12 8" preserveAspectRatio="none"><rect x="0.6" y="0.6" width="10.8" height="6.8" rx="1.8" fill="#3cb41c" stroke="#b86a48" stroke-width="1.2"/><rect x="3" y="2.2" width="6" height="3.6" fill="#58c830"/><rect x="5.3" y="2" width="1.4" height="4" fill="#e0ec70"/><rect x="3.2" y="3.5" width="5.6" height="1" fill="#c8e060"/></svg>
<div class="t" style="left:62.5px;top:138.64999999999998px;font-size:8.5px;letter-spacing:-0.360px;">1.10::Negligible Eff</div>
<svg class="a" style="left:44.5px;top:152.39999999999998px" width="12" height="8" viewBox="0 0 12 8" preserveAspectRatio="none"><rect x="0.6" y="0.6" width="10.8" height="6.8" rx="1.8" fill="#3cb41c" stroke="#b86a48" stroke-width="1.2"/><rect x="3" y="2.2" width="6" height="3.6" fill="#58c830"/><rect x="5.3" y="2" width="1.4" height="4" fill="#e0ec70"/><rect x="3.2" y="3.5" width="5.6" height="1" fill="#c8e060"/></svg>
<div class="t" style="left:62.5px;top:151.09999999999997px;font-size:8.5px;letter-spacing:-0.360px;">1.11::No effect</div>
<div class="a" style="left:19px;top:165px;width:7px;height:7px;background:#fff;border:1px solid #c8c8c8"></div>
<div class="a" style="left:21px;top:168px;width:3px;height:1px;background:#222;"></div>
<svg class="a" style="left:30.5px;top:162.45000000000002px" width="9.5" height="12.5" viewBox="0 0 12 13" preserveAspectRatio="none"><path d="M0.6 3.8 L5 0.8 L6.6 1.7 L7.4 0.9 L11.5 2.4 V9.8 L6 12.5 L0.6 10.6 Z" fill="#2a2a10"/><path d="M3.9 5.2 L10.6 3.1 V9.3 L3.9 11.5 Z" fill="#e8e468"/><path d="M5 2 L6.6 2.9 L7.6 2 " fill="none" stroke="#e8e468" stroke-width=".7"/></svg>
<div class="t" style="left:48px;top:163.55px;font-size:8.5px;letter-spacing:-0.360px;">2::CPU BOARD</div>
<div class="a" style="left:34px;top:178px;width:7px;height:7px;background:#fff;border:1px solid #c8c8c8"></div>
<div class="a" style="left:36px;top:181px;width:3px;height:1px;background:#222;"></div>
<div class="a" style="left:37px;top:180px;width:1px;height:3px;background:#222;"></div>
<svg class="a" style="left:46.0px;top:175.29999999999995px" width="10" height="12" viewBox="0 0 10 12" preserveAspectRatio="none"><path d="M0.6 3.6 L6.8 0.6 L9.5 1.6 V8.6 L3 11.6 L0.6 10.4 Z" fill="#14145a"/><path d="M2.6 4.6 L8.8 2.2 V8.2 L2.6 10.8 Z" fill="#2828b4"/><rect x="4.4" y="5" width="2.6" height="3.4" fill="none" stroke="#b0b8ff" stroke-width=".9" transform="skewY(-20) translate(0,2.1)"/></svg>
<div class="t" style="left:62.5px;top:175.99999999999994px;font-size:8.5px;letter-spacing:-0.360px;">2.1::I.C., DIGITAL</div>
<div class="a" style="left:34px;top:190px;width:7px;height:7px;background:#fff;border:1px solid #c8c8c8"></div>
<div class="a" style="left:36px;top:193px;width:3px;height:1px;background:#222;"></div>
<div class="a" style="left:37px;top:192px;width:1px;height:3px;background:#222;"></div>
<svg class="a" style="left:46.0px;top:187.75px" width="10" height="12" viewBox="0 0 10 12" preserveAspectRatio="none"><path d="M0.6 3.6 L6.8 0.6 L9.5 1.6 V8.6 L3 11.6 L0.6 10.4 Z" fill="#14145a"/><path d="M2.6 4.6 L8.8 2.2 V8.2 L2.6 10.8 Z" fill="#2828b4"/><rect x="4.4" y="5" width="2.6" height="3.4" fill="none" stroke="#b0b8ff" stroke-width=".9" transform="skewY(-20) translate(0,2.1)"/></svg>
<div class="t" style="left:62.5px;top:188.45px;font-size:8.5px;letter-spacing:-0.360px;">2.2::CAPACITOR, I</div>
<div class="a" style="left:34px;top:203px;width:7px;height:7px;background:#fff;border:1px solid #c8c8c8"></div>
<div class="a" style="left:36px;top:206px;width:3px;height:1px;background:#222;"></div>
<div class="a" style="left:37px;top:205px;width:1px;height:3px;background:#222;"></div>
<svg class="a" style="left:46.0px;top:200.20000000000005px" width="10" height="12" viewBox="0 0 10 12" preserveAspectRatio="none"><path d="M0.6 3.6 L6.8 0.6 L9.5 1.6 V8.6 L3 11.6 L0.6 10.4 Z" fill="#14145a"/><path d="M2.6 4.6 L8.8 2.2 V8.2 L2.6 10.8 Z" fill="#2828b4"/><rect x="4.4" y="5" width="2.6" height="3.4" fill="none" stroke="#b0b8ff" stroke-width=".9" transform="skewY(-20) translate(0,2.1)"/></svg>
<div class="t" style="left:62.5px;top:200.90000000000003px;font-size:8.5px;letter-spacing:-0.360px;">2.3::CAPACITOR, I</div>
<div class="a" style="left:34px;top:215px;width:7px;height:7px;background:#fff;border:1px solid #c8c8c8"></div>
<div class="a" style="left:36px;top:218px;width:3px;height:1px;background:#222;"></div>
<div class="a" style="left:37px;top:217px;width:1px;height:3px;background:#222;"></div>
<svg class="a" style="left:46.0px;top:212.64999999999998px" width="10" height="12" viewBox="0 0 10 12" preserveAspectRatio="none"><path d="M0.6 3.6 L6.8 0.6 L9.5 1.6 V8.6 L3 11.6 L0.6 10.4 Z" fill="#14145a"/><path d="M2.6 4.6 L8.8 2.2 V8.2 L2.6 10.8 Z" fill="#2828b4"/><rect x="4.4" y="5" width="2.6" height="3.4" fill="none" stroke="#b0b8ff" stroke-width=".9" transform="skewY(-20) translate(0,2.1)"/></svg>
<div class="t" style="left:62.5px;top:213.34999999999997px;font-size:8.5px;letter-spacing:-0.360px;">2.4::RESISTOR, FI</div>
<div class="a" style="left:34px;top:228px;width:7px;height:7px;background:#fff;border:1px solid #c8c8c8"></div>
<div class="a" style="left:36px;top:231px;width:3px;height:1px;background:#222;"></div>
<div class="a" style="left:37px;top:230px;width:1px;height:3px;background:#222;"></div>
<svg class="a" style="left:46.0px;top:225.10000000000002px" width="10" height="12" viewBox="0 0 10 12" preserveAspectRatio="none"><path d="M0.6 3.6 L6.8 0.6 L9.5 1.6 V8.6 L3 11.6 L0.6 10.4 Z" fill="#14145a"/><path d="M2.6 4.6 L8.8 2.2 V8.2 L2.6 10.8 Z" fill="#2828b4"/><rect x="4.4" y="5" width="2.6" height="3.4" fill="none" stroke="#b0b8ff" stroke-width=".9" transform="skewY(-20) translate(0,2.1)"/></svg>
<div class="t" style="left:62.5px;top:225.8px;font-size:8.5px;letter-spacing:-0.360px;">2.5::RESISTOR, FI</div>
</div>
<div class="a" style="left:22px;top:565px;width:142px;height:12px;background:#f6f5ee;"></div>
<div class="btn" style="left:22px;top:565px;width:10px;height:12px"></div>
<svg class="a" style="left:25.5px;top:568.5px" width="3" height="5" viewBox="0 0 3 5" preserveAspectRatio="none"><path d="M3 0 L3 5 L0 2.5 Z" fill="#000"/></svg>
<div class="btn" style="left:32px;top:565px;width:34px;height:12px"></div>
<div class="btn" style="left:142px;top:565px;width:10px;height:12px"></div>
<svg class="a" style="left:146px;top:568.5px" width="3" height="5" viewBox="0 0 3 5" preserveAspectRatio="none"><path d="M0 0 L0 5 L3 2.5 Z" fill="#000"/></svg>
<div class="a" style="left:152px;top:564px;width:12px;height:13px;background:#ece9d8;"></div>
<div class="a" style="left:186px;top:76px;width:577px;height:485px;background:#fff;border:1px solid #303030;border-top-color:#9a9a92;border-left-color:#484848;"></div>
<div class="a" style="left:187px;top:78px;width:570px;height:463px;background:#ece9d8;"></div>
<div class="a" style="left:187px;top:77px;width:575px;height:1px;background:#fff;"></div>
<div class="a" style="left:762px;top:74px;width:1px;height:2px;background:#505050;"></div>
<div class="a" style="left:178px;top:73px;width:584px;height:3px;background:#f4f2ea;"></div>
<div class="a" style="left:757px;top:78px;width:5px;height:463px;background:#f4f2ea;"></div>
<div class="a" style="left:218px;top:78px;width:539px;height:49px;background:#3b4a98;"></div>
<div class="a" style="left:187px;top:78px;width:31px;height:49px;background:#ece9d8;"></div>
<div class="a" style="left:218px;top:78px;width:1px;height:49px;background:#e8e8f4;"></div>
<div class="a" style="left:267px;top:78px;width:1px;height:49px;background:#e8e8f4;"></div>
<div class="a" style="left:297px;top:78px;width:1px;height:49px;background:#e8e8f4;"></div>
<div class="a" style="left:431px;top:78px;width:1px;height:49px;background:#e8e8f4;"></div>
<div class="a" style="left:588px;top:78px;width:1px;height:49px;background:#e8e8f4;"></div>
<div class="a" style="left:727px;top:78px;width:1px;height:49px;background:#e8e8f4;"></div>
<div class="a" style="left:187px;top:126px;width:570px;height:1px;background:#30306a;"></div>
<div class="t" style="left:221.8px;top:97.5px;font-size:8.6px;color:#fff;font-weight:bold;">Symbol</div>
<div class="t" style="left:273px;top:97.5px;font-size:8.3px;color:#fff;font-weight:bold;">ID</div>
<div class="t" style="left:335px;top:97.5px;font-size:8.6px;color:#fff;font-weight:bold;">Description</div>
<div class="t" style="left:455px;top:97.5px;font-size:8.4px;color:#fff;font-weight:bold;">Local/Next Level Effects</div>
<div class="t" style="left:607px;top:97.5px;font-size:8.6px;color:#fff;font-weight:bold;">Causes/Contributors</div>
<div class="t" style="left:729.5px;top:97.5px;font-size:8.6px;color:#fff;font-weight:bold;width:27px;overflow:hidden;">Apport</div>
<div class="a" style="left:187px;top:127px;width:32px;height:29px;background:#ece9d8;border-right:1px solid #404040;border-bottom:1px solid #404040"></div>
<div class="a" style="left:219px;top:127px;width:48px;height:29px;background:#ece9d8;border-right:1px solid #404040;border-bottom:1px solid #404040"></div>
<div class="t" style="left:189px;top:128.2px;font-size:8.2px;letter-spacing:-0.348px;">1</div>
<div class="a" style="left:220.4px;top:129px;width:12px;height:8px;background:#f4f020;border-right:1px solid #a09a10;border-bottom:1px solid #a09a10"></div>
<div class="a" style="left:267px;top:127px;width:30px;height:29px;background:#fff;"></div>
<div class="t" style="left:268.4px;top:128.2px;font-size:8.2px;color:#000;letter-spacing:-0.2px;">1</div>
<div class="a" style="left:297px;top:127px;width:134px;height:29px;background:#eeeefd;"></div>
<div class="t" style="left:298px;top:128.1px;font-size:8.3px;letter-spacing:-0.418px;color:#000;">POWER SUPPLY</div>
<div class="a" style="left:431px;top:127px;width:157px;height:29px;background:#ece9d8;"></div>
<div class="a" style="left:588px;top:127px;width:139px;height:29px;background:#ece9d8;"></div>
<div class="a" style="left:267px;top:155px;width:164px;height:1px;background:#e0e0ec;"></div>
<div class="a" style="left:431px;top:155px;width:157px;height:1px;background:#f6f4ea;"></div>
<div class="a" style="left:588px;top:155px;width:139px;height:1px;background:#f6f4ea;"></div>
<div class="a" style="left:727px;top:155px;width:30px;height:1px;background:#f6f4ea;"></div>
<div class="a" style="left:187px;top:156px;width:32px;height:30px;background:#ece9d8;border-right:1px solid #404040;border-bottom:1px solid #404040"></div>
<div class="a" style="left:219px;top:156px;width:48px;height:30px;background:#ece9d8;border-right:1px solid #404040;border-bottom:1px solid #404040"></div>
<div class="t" style="left:189px;top:157.2px;font-size:8.2px;letter-spacing:-0.348px;">2</div>
<div class="a" style="left:220.4px;top:158px;width:12px;height:8px;background:#0a0a80;border-right:1px solid #3a3a70;border-bottom:1px solid #3a3a70"></div>
<div class="a" style="left:267px;top:156px;width:30px;height:30px;background:#fff;"></div>
<div class="t" style="left:268.4px;top:157.2px;font-size:8.2px;color:#000;letter-spacing:-0.2px;">1.1</div>
<div class="a" style="left:297px;top:156px;width:134px;height:30px;background:#eeeefd;"></div>
<div class="t" style="left:298px;top:157.1px;font-size:8.3px;letter-spacing:-0.418px;color:#000;">CAPACITOR, FIXED CK</div>
<div class="a" style="left:431px;top:156px;width:157px;height:30px;background:#ece9d8;"></div>
<div class="a" style="left:588px;top:156px;width:139px;height:30px;background:#ece9d8;"></div>
<div class="a" style="left:267px;top:185px;width:164px;height:1px;background:#e0e0ec;"></div>
<div class="a" style="left:431px;top:185px;width:157px;height:1px;background:#f6f4ea;"></div>
<div class="a" style="left:588px;top:185px;width:139px;height:1px;background:#f6f4ea;"></div>
<div class="a" style="left:727px;top:185px;width:30px;height:1px;background:#f6f4ea;"></div>
<div class="a" style="left:187px;top:186px;width:32px;height:29px;background:#ece9d8;border-right:1px solid #404040;border-bottom:1px solid #404040"></div>
<div class="a" style="left:219px;top:186px;width:48px;height:29px;background:#ece9d8;border-right:1px solid #404040;border-bottom:1px solid #404040"></div>
<div class="t" style="left:189px;top:187.2px;font-size:8.2px;letter-spacing:-0.348px;">3</div>
<div class="a" style="left:220.4px;top:188px;width:12px;height:8px;background:#0a0a80;border-right:1px solid #3a3a70;border-bottom:1px solid #3a3a70"></div>
<div class="a" style="left:267px;top:186px;width:30px;height:29px;background:#fff;"></div>
<div class="t" style="left:268.4px;top:187.2px;font-size:8.2px;color:#000;letter-spacing:-0.2px;">1.2</div>
<div class="a" style="left:297px;top:186px;width:134px;height:29px;background:#eeeefd;"></div>
<div class="t" style="left:298px;top:187.1px;font-size:8.3px;letter-spacing:-0.418px;color:#000;">CAPACITOR, FIXED CB</div>
<div class="a" style="left:431px;top:186px;width:157px;height:29px;background:#ece9d8;"></div>
<div class="a" style="left:588px;top:186px;width:139px;height:29px;background:#ece9d8;"></div>
<div class="a" style="left:267px;top:214px;width:164px;height:1px;background:#e0e0ec;"></div>
<div class="a" style="left:431px;top:214px;width:157px;height:1px;background:#f6f4ea;"></div>
<div class="a" style="left:588px;top:214px;width:139px;height:1px;background:#f6f4ea;"></div>
<div class="a" style="left:727px;top:214px;width:30px;height:1px;background:#f6f4ea;"></div>
<div class="a" style="left:187px;top:215px;width:32px;height:30px;background:#ece9d8;border-right:1px solid #404040;border-bottom:1px solid #404040"></div>
<div class="a" style="left:219px;top:215px;width:48px;height:30px;background:#ece9d8;border-right:1px solid #404040;border-bottom:1px solid #404040"></div>
<div class="t" style="left:189px;top:216.2px;font-size:8.2px;letter-spacing:-0.348px;">4</div>
<div class="a" style="left:220.4px;top:217px;width:12px;height:8px;background:#0a0a80;border-right:1px solid #3a3a70;border-bottom:1px solid #3a3a70"></div>
<div class="a" style="left:267px;top:215px;width:30px;height:30px;background:#fff;"></div>
<div class="t" style="left:268.4px;top:216.2px;font-size:8.2px;color:#000;letter-spacing:-0.2px;">1.3</div>
<div class="a" style="left:297px;top:215px;width:134px;height:30px;background:#eeeefd;"></div>
<div class="t" style="left:298px;top:216.1px;font-size:8.3px;letter-spacing:-0.418px;color:#000;">CAPACITOR, FIXED CK</div>
<div class="a" style="left:431px;top:215px;width:157px;height:30px;background:#ece9d8;"></div>
<div class="a" style="left:588px;top:215px;width:139px;height:30px;background:#ece9d8;"></div>
<div class="a" style="left:267px;top:244px;width:164px;height:1px;background:#e0e0ec;"></div>
<div class="a" style="left:431px;top:244px;width:157px;height:1px;background:#f6f4ea;"></div>
<div class="a" style="left:588px;top:244px;width:139px;height:1px;background:#f6f4ea;"></div>
<div class="a" style="left:727px;top:244px;width:30px;height:1px;background:#f6f4ea;"></div>
<div class="a" style="left:187px;top:245px;width:32px;height:29px;background:#ece9d8;border-right:1px solid #404040;border-bottom:1px solid #404040"></div>
<div class="a" style="left:219px;top:245px;width:48px;height:29px;background:#ece9d8;border-right:1px solid #404040;border-bottom:1px solid #404040"></div>
<div class="t" style="left:189px;top:246.2px;font-size:8.2px;letter-spacing:-0.348px;">5</div>
<div class="a" style="left:220.4px;top:247px;width:12px;height:8px;background:#0a0a80;border-right:1px solid #3a3a70;border-bottom:1px solid #3a3a70"></div>
<div class="a" style="left:267px;top:245px;width:30px;height:29px;background:#fff;"></div>
<div class="t" style="left:268.4px;top:246.2px;font-size:8.2px;color:#000;letter-spacing:-0.2px;">1.4</div>
<div class="a" style="left:297px;top:245px;width:134px;height:29px;background:#eeeefd;"></div>
<div class="t" style="left:298px;top:246.1px;font-size:8.3px;letter-spacing:-0.418px;color:#000;">RESISTOR, FIXED RCR</div>
<div class="a" style="left:431px;top:245px;width:157px;height:29px;background:#ece9d8;"></div>
<div class="a" style="left:588px;top:245px;width:139px;height:29px;background:#ece9d8;"></div>
<div class="a" style="left:267px;top:273px;width:164px;height:1px;background:#e0e0ec;"></div>
<div class="a" style="left:431px;top:273px;width:157px;height:1px;background:#f6f4ea;"></div>
<div class="a" style="left:588px;top:273px;width:139px;height:1px;background:#f6f4ea;"></div>
<div class="a" style="left:727px;top:273px;width:30px;height:1px;background:#f6f4ea;"></div>
<div class="a" style="left:187px;top:274px;width:32px;height:30px;background:#ece9d8;border-right:1px solid #404040;border-bottom:1px solid #404040"></div>
<div class="a" style="left:219px;top:274px;width:48px;height:30px;background:#ece9d8;border-right:1px solid #404040;border-bottom:1px solid #404040"></div>
<div class="t" style="left:189px;top:275.2px;font-size:8.2px;letter-spacing:-0.348px;">6</div>
<div class="a" style="left:220.4px;top:276px;width:12px;height:8px;background:#0a0a80;border-right:1px solid #3a3a70;border-bottom:1px solid #3a3a70"></div>
<div class="a" style="left:267px;top:274px;width:30px;height:30px;background:#fff;"></div>
<div class="t" style="left:268.4px;top:275.2px;font-size:8.2px;color:#000;letter-spacing:-0.2px;">1.5</div>
<div class="a" style="left:297px;top:274px;width:134px;height:30px;background:#eeeefd;"></div>
<div class="t" style="left:298px;top:275.1px;font-size:8.3px;letter-spacing:-0.418px;color:#000;">RESISTOR, FIXED RC</div>
<div class="a" style="left:431px;top:274px;width:157px;height:30px;background:#ece9d8;"></div>
<div class="a" style="left:588px;top:274px;width:139px;height:30px;background:#ece9d8;"></div>
<div class="a" style="left:267px;top:303px;width:164px;height:1px;background:#e0e0ec;"></div>
<div class="a" style="left:431px;top:303px;width:157px;height:1px;background:#f6f4ea;"></div>
<div class="a" style="left:588px;top:303px;width:139px;height:1px;background:#f6f4ea;"></div>
<div class="a" style="left:727px;top:303px;width:30px;height:1px;background:#f6f4ea;"></div>
<div class="a" style="left:187px;top:304px;width:32px;height:29px;background:#ece9d8;border-right:1px solid #404040;border-bottom:1px solid #404040"></div>
<div class="a" style="left:219px;top:304px;width:48px;height:29px;background:#ece9d8;border-right:1px solid #404040;border-bottom:1px solid #404040"></div>
<div class="t" style="left:189px;top:305.2px;font-size:8.2px;letter-spacing:-0.348px;">7</div>
<div class="a" style="left:220.4px;top:306px;width:12px;height:8px;background:#0a0a80;border-right:1px solid #3a3a70;border-bottom:1px solid #3a3a70"></div>
<div class="a" style="left:267px;top:304px;width:30px;height:29px;background:#fff;"></div>
<div class="t" style="left:268.4px;top:305.2px;font-size:8.2px;color:#000;letter-spacing:-0.2px;">1.6</div>
<div class="a" style="left:297px;top:304px;width:134px;height:29px;background:#eeeefd;"></div>
<div class="t" style="left:298px;top:305.1px;font-size:8.3px;letter-spacing:-0.418px;color:#000;">I.C., DIGITAL</div>
<div class="a" style="left:431px;top:304px;width:157px;height:29px;background:#ece9d8;"></div>
<div class="a" style="left:588px;top:304px;width:139px;height:29px;background:#ece9d8;"></div>
<div class="a" style="left:267px;top:332px;width:164px;height:1px;background:#e0e0ec;"></div>
<div class="a" style="left:431px;top:332px;width:157px;height:1px;background:#f6f4ea;"></div>
<div class="a" style="left:588px;top:332px;width:139px;height:1px;background:#f6f4ea;"></div>
<div class="a" style="left:727px;top:332px;width:30px;height:1px;background:#f6f4ea;"></div>
<div class="a" style="left:187px;top:333px;width:32px;height:30px;background:#ece9d8;border-right:1px solid #404040;border-bottom:1px solid #404040"></div>
<div class="a" style="left:219px;top:333px;width:48px;height:30px;background:#ece9d8;border-right:1px solid #404040;border-bottom:1px solid #404040"></div>
<div class="t" style="left:189px;top:334.2px;font-size:8.2px;letter-spacing:-0.348px;">8</div>
<div class="a" style="left:220.4px;top:335px;width:12px;height:8px;background:#e81c1c;border-right:1px solid #a04040;border-bottom:1px solid #a04040"></div>
<div class="a" style="left:267px;top:333px;width:30px;height:30px;background:#fff;"></div>
<div class="t" style="left:268.4px;top:334.2px;font-size:8.2px;color:#000;letter-spacing:-0.2px;">1.7</div>
<div class="a" style="left:297px;top:333px;width:134px;height:30px;background:#eeeefd;"></div>
<div class="t" style="left:299px;top:334.8px;font-size:8.05px;color:#000;">Erroneous Input (Increased)</div>
<div class="a" style="left:431px;top:333px;width:157px;height:30px;background:#eeeefd;"></div>
<div class="t" style="left:433.5px;top:334.8px;font-size:8.05px;color:#000;">0.1 : Intermittent Operation</div>
<div class="a" style="left:588px;top:333px;width:139px;height:30px;background:#d2d2d2;"></div>
<div class="t" style="left:590px;top:334.8px;font-size:8.1px;color:#000;">Contributor:1.2.1Shorted (Electrical)</div>
<div class="t" style="left:590px;top:345.6px;font-size:8.1px;color:#000;">Contributor:1.3.1Shorted (Electrical)</div>
<div class="a" style="left:267px;top:362px;width:164px;height:1px;background:#e0e0ec;"></div>
<div class="a" style="left:431px;top:362px;width:157px;height:1px;background:#e0e0ec;"></div>
<div class="a" style="left:588px;top:362px;width:139px;height:1px;background:#dcdcdc;"></div>
<div class="a" style="left:727px;top:362px;width:30px;height:1px;background:#f6f4ea;"></div>
<div class="a" style="left:187px;top:363px;width:32px;height:29px;background:#ece9d8;border-right:1px solid #404040;border-bottom:1px solid #404040"></div>
<div class="a" style="left:219px;top:363px;width:48px;height:29px;background:#ece9d8;border-right:1px solid #404040;border-bottom:1px solid #404040"></div>
<div class="t" style="left:189px;top:364.2px;font-size:8.2px;letter-spacing:-0.348px;">9</div>
<div class="a" style="left:220.4px;top:365px;width:12px;height:8px;background:#e81c1c;border-right:1px solid #a04040;border-bottom:1px solid #a04040"></div>
<div class="a" style="left:267px;top:363px;width:30px;height:29px;background:#fff;"></div>
<div class="t" style="left:268.4px;top:364.2px;font-size:8.2px;color:#000;letter-spacing:-0.2px;">1.8</div>
<div class="a" style="left:297px;top:363px;width:134px;height:29px;background:#eeeefd;"></div>
<div class="t" style="left:299px;top:364.8px;font-size:8.05px;color:#000;">Incorrect Meter Reading</div>
<div class="a" style="left:431px;top:363px;width:157px;height:29px;background:#eeeefd;"></div>
<div class="t" style="left:433.5px;top:364.8px;font-size:8.05px;color:#000;">0.2 : Negligible Effect for small change</div>
<div class="a" style="left:588px;top:363px;width:139px;height:29px;background:#d2d2d2;"></div>
<div class="t" style="left:590px;top:364.8px;font-size:8.1px;color:#000;">Contributor:1.1.1Shorted (Electrical)</div>
<div class="a" style="left:267px;top:391px;width:164px;height:1px;background:#e0e0ec;"></div>
<div class="a" style="left:431px;top:391px;width:157px;height:1px;background:#e0e0ec;"></div>
<div class="a" style="left:588px;top:391px;width:139px;height:1px;background:#dcdcdc;"></div>
<div class="a" style="left:727px;top:391px;width:30px;height:1px;background:#f6f4ea;"></div>
<div class="a" style="left:187px;top:392px;width:32px;height:30px;background:#ece9d8;border-right:1px solid #404040;border-bottom:1px solid #404040"></div>
<div class="a" style="left:219px;top:392px;width:48px;height:30px;background:#ece9d8;border-right:1px solid #404040;border-bottom:1px solid #404040"></div>
<div class="t" style="left:189px;top:393.2px;font-size:8.2px;letter-spacing:-0.348px;">10</div>
<div class="a" style="left:220.4px;top:394px;width:12px;height:8px;background:#e81c1c;border-right:1px solid #a04040;border-bottom:1px solid #a04040"></div>
<div class="a" style="left:267px;top:392px;width:30px;height:30px;background:#fff;"></div>
<div class="t" style="left:268.4px;top:393.2px;font-size:8.2px;color:#000;letter-spacing:-0.2px;">1.9</div>
<div class="a" style="left:297px;top:392px;width:134px;height:30px;background:#eeeefd;"></div>
<div class="t" style="left:299px;top:393.8px;font-size:8.05px;color:#000;">Loss of Output</div>
<div class="a" style="left:431px;top:392px;width:157px;height:30px;background:#eeeefd;"></div>
<div class="t" style="left:433.5px;top:393.8px;font-size:8.05px;color:#000;">0.1 : Intermittent Operation</div>
<div class="a" style="left:588px;top:392px;width:139px;height:30px;background:#d2d2d2;"></div>
<div class="t" style="left:590px;top:393.8px;font-size:8.1px;color:#000;">Contributor:1.1.3Open (Electrical)</div>
<div class="t" style="left:590px;top:404.6px;font-size:8.1px;color:#000;">Contributor:1.2.2Open (Electrical)</div>
<div class="a" style="left:267px;top:421px;width:164px;height:1px;background:#e0e0ec;"></div>
<div class="a" style="left:431px;top:421px;width:157px;height:1px;background:#e0e0ec;"></div>
<div class="a" style="left:588px;top:421px;width:139px;height:1px;background:#dcdcdc;"></div>
<div class="a" style="left:727px;top:421px;width:30px;height:1px;background:#f6f4ea;"></div>
<div class="a" style="left:187px;top:422px;width:32px;height:29px;background:#ece9d8;border-right:1px solid #404040;border-bottom:1px solid #404040"></div>
<div class="a" style="left:219px;top:422px;width:48px;height:29px;background:#ece9d8;border-right:1px solid #404040;border-bottom:1px solid #404040"></div>
<div class="t" style="left:189px;top:423.2px;font-size:8.2px;letter-spacing:-0.348px;">11</div>
<div class="a" style="left:220.4px;top:424px;width:12px;height:8px;background:#e81c1c;border-right:1px solid #a04040;border-bottom:1px solid #a04040"></div>
<div class="a" style="left:267px;top:422px;width:30px;height:29px;background:#fff;"></div>
<div class="t" style="left:268.4px;top:423.2px;font-size:8.2px;color:#000;letter-spacing:-0.2px;">1.10</div>
<div class="a" style="left:297px;top:422px;width:134px;height:29px;background:#eeeefd;"></div>
<div class="t" style="left:299px;top:423.8px;font-size:8.05px;color:#000;">Negligible Effect for small</div>
<div class="t" style="left:299px;top:434.6px;font-size:8.05px;color:#000;">changes</div>
<div class="a" style="left:431px;top:422px;width:157px;height:29px;background:#eeeefd;"></div>
<div class="t" style="left:433.5px;top:423.8px;font-size:8.05px;color:#000;">0.2 : Negligible Effect for small change</div>
<div class="a" style="left:588px;top:422px;width:139px;height:29px;background:#d2d2d2;"></div>
<div class="t" style="left:590px;top:423.8px;font-size:8.1px;color:#000;">Contributor:1.1.2Change of Value</div>
<div class="t" style="left:590px;top:434.6px;font-size:8.1px;color:#000;">Contributor:1.2.3Change of Value</div>
<div class="a" style="left:267px;top:450px;width:164px;height:1px;background:#e0e0ec;"></div>
<div class="a" style="left:431px;top:450px;width:157px;height:1px;background:#e0e0ec;"></div>
<div class="a" style="left:588px;top:450px;width:139px;height:1px;background:#dcdcdc;"></div>
<div class="a" style="left:727px;top:450px;width:30px;height:1px;background:#f6f4ea;"></div>
<div class="a" style="left:187px;top:451px;width:32px;height:30px;background:#ece9d8;border-right:1px solid #404040;border-bottom:1px solid #404040"></div>
<div class="a" style="left:219px;top:451px;width:48px;height:30px;background:#ece9d8;border-right:1px solid #404040;border-bottom:1px solid #404040"></div>
<div class="t" style="left:189px;top:452.2px;font-size:8.2px;letter-spacing:-0.348px;">12</div>
<div class="a" style="left:220.4px;top:453px;width:12px;height:8px;background:#e81c1c;border-right:1px solid #a04040;border-bottom:1px solid #a04040"></div>
<div class="a" style="left:267px;top:451px;width:30px;height:30px;background:#fff;"></div>
<div class="t" style="left:268.4px;top:452.2px;font-size:8.2px;color:#000;letter-spacing:-0.2px;">1.11</div>
<div class="a" style="left:297px;top:451px;width:134px;height:30px;background:#eeeefd;"></div>
<div class="t" style="left:299px;top:452.8px;font-size:8.05px;color:#000;">No effect</div>
<div class="a" style="left:431px;top:451px;width:157px;height:30px;background:#eeeefd;"></div>
<div class="t" style="left:433.5px;top:452.8px;font-size:8.05px;color:#000;">0.3 : No effect</div>
<div class="a" style="left:588px;top:451px;width:139px;height:30px;background:#d2d2d2;"></div>
<div class="t" style="left:590px;top:452.8px;font-size:8.1px;color:#000;">Contributor:1.1.4Other</div>
<div class="t" style="left:590px;top:463.6px;font-size:8.1px;color:#000;">Contributor:1.2.4Other</div>
<div class="a" style="left:267px;top:480px;width:164px;height:1px;background:#e0e0ec;"></div>
<div class="a" style="left:431px;top:480px;width:157px;height:1px;background:#e0e0ec;"></div>
<div class="a" style="left:588px;top:480px;width:139px;height:1px;background:#dcdcdc;"></div>
<div class="a" style="left:727px;top:480px;width:30px;height:1px;background:#f6f4ea;"></div>
<div class="a" style="left:296px;top:127px;width:1px;height:354px;background:#dcdce8;"></div>
<div class="a" style="left:430px;top:127px;width:1px;height:354px;background:#dcdce8;"></div>
<div class="a" style="left:587px;top:127px;width:1px;height:206px;background:#f6f4ea;"></div>
<div class="a" style="left:587px;top:333px;width:1px;height:148px;background:#dcdce8;"></div>
<div class="a" style="left:726px;top:127px;width:1px;height:206px;background:#f6f4ea;"></div>
<div class="a" style="left:726px;top:333px;width:1px;height:148px;background:#e0e0e0;"></div>
<div class="a" style="left:756px;top:127px;width:1px;height:354px;background:#f6f4ea;"></div>
<div class="a" style="left:297px;top:156px;width:134px;height:30px;border:1px solid #404040"></div>
<div class="btn" style="left:419px;top:158px;width:11px;height:11px"></div>
<svg class="a" style="left:421.5px;top:162px" width="6" height="4" viewBox="0 0 6 4" preserveAspectRatio="none"><path d="M0 0.5 H6 L3 3.5 Z" fill="#000"/></svg>
<div class="a" style="left:419px;top:169px;width:11px;height:1px;background:#808080;"></div>
<div class="a" style="left:187px;top:534px;width:575px;height:26px;background:linear-gradient(#ece9d8 0%,#f1efe3 20%,#faf9f4 40%,#fff 55%,#fff 100%)"></div>
<div class="a" style="left:189px;top:543px;width:10px;height:11px;background:#c6d6f8;border-radius:2px"></div>
<svg class="a" style="left:191.5px;top:545.5px" width="5" height="6" viewBox="0 0 5 6" preserveAspectRatio="none"><path d="M4 0.5 L1 3 L4 5.5" fill="none" stroke="#3a5ec0" stroke-width="1.4"/></svg>
<div class="a" style="left:201px;top:543px;width:118px;height:11px;background:#c2d3f6;border-radius:2px"></div>
<div class="a" style="left:258px;top:546px;width:1px;height:5px;background:#a8bef0;"></div>
<div class="a" style="left:260px;top:546px;width:1px;height:5px;background:#a8bef0;"></div>
<div class="a" style="left:262px;top:546px;width:1px;height:5px;background:#a8bef0;"></div>
<div class="a" style="left:745px;top:543px;width:11px;height:11px;background:#c6d6f8;border-radius:2px"></div>
<svg class="a" style="left:748px;top:545.5px" width="5" height="6" viewBox="0 0 5 6" preserveAspectRatio="none"><path d="M1 0.5 L4 3 L1 5.5" fill="none" stroke="#3a5ec0" stroke-width="1.4"/></svg>
<div class="a" style="left:444px;top:140px;width:114px;height:134px;background:#fff;border:1px solid #aca899;box-shadow:2px 2px 2px rgba(0,0,0,.35)"></div>
<div class="t" style="left:462px;top:144.3px;font-size:8.6px;letter-spacing:-0.456px;color:#000;">Delete</div>
<svg class="a" style="left:548.5px;top:147px" width="3" height="5" viewBox="0 0 3 5" preserveAspectRatio="none"><path d="M0 0 L0 5 L3 2.5 Z" fill="#000"/></svg>
<div class="a" style="left:446px;top:160px;width:110px;height:1px;background:#d0cec0;"></div>
<div class="a" style="left:446px;top:165px;width:108px;height:15px;background:#316ac5;"></div>
<div class="t" style="left:462px;top:167.10000000000002px;font-size:8.6px;letter-spacing:-0.456px;color:#fff;">Switch to</div>
<svg class="a" style="left:548.5px;top:170px" width="3" height="5" viewBox="0 0 3 5" preserveAspectRatio="none"><path d="M0 0 L0 5 L3 2.5 Z" fill="#fff"/></svg>
<div class="a" style="left:446px;top:183px;width:110px;height:1px;background:#d0cec0;"></div>
<div class="t" style="left:462px;top:189.8px;font-size:8.6px;letter-spacing:-0.456px;color:#000;"><u>F</u>ilter</div>
<svg class="a" style="left:548.5px;top:192.5px" width="3" height="5" viewBox="0 0 3 5" preserveAspectRatio="none"><path d="M0 0 L0 5 L3 2.5 Z" fill="#000"/></svg>
<div class="t" style="left:462px;top:205.3px;font-size:8.6px;letter-spacing:-0.456px;color:#000;">Zoom In</div>
<div class="t" style="left:462px;top:220.8px;font-size:8.6px;letter-spacing:-0.456px;color:#000;">Zoom Out</div>
<div class="t" style="left:462px;top:236.5px;font-size:8.6px;letter-spacing:-0.456px;color:#000;">100 %</div>
<div class="a" style="left:446px;top:251px;width:110px;height:1px;background:#d0cec0;"></div>
<div class="t" style="left:462px;top:259.2px;font-size:8.6px;letter-spacing:-0.456px;color:#000;">Spelling-Check</div>
<div class="a" style="left:554px;top:163px;width:95px;height:50px;background:#fff;border:1px solid #aca899;box-shadow:2px 2px 2px rgba(0,0,0,.35)"></div>
<div class="t" style="left:572px;top:166.8px;font-size:8.6px;letter-spacing:-0.456px;color:#000;">ISO9000 Grid</div>
<div class="a" style="left:556px;top:180px;width:91px;height:15px;background:#316ac5;"></div>
<div class="t" style="left:572px;top:182.4px;font-size:8.6px;letter-spacing:-0.456px;color:#fff;">Severity Grid</div>
<div class="t" style="left:572px;top:198.10000000000002px;font-size:8.6px;letter-spacing:-0.456px;color:#000;">Phrase Grid</div>
<div class="a" style="left:183px;top:560px;width:70px;height:17px;background:#ece9d8;border:1px solid #404040;border-left-color:#fff"></div>
<div class="a" style="left:322px;top:560px;width:67px;height:17px;background:#ece9d8;border:1px solid #404040;border-left-color:#fff"></div>
<div class="a" style="left:389px;top:560px;width:67px;height:17px;background:#ece9d8;border:1px solid #404040;border-left-color:#fff"></div>
<div class="a" style="left:456px;top:560px;width:68px;height:17px;background:#ece9d8;border:1px solid #404040;border-left-color:#fff"></div>
<div class="a" style="left:252px;top:559px;width:70px;height:20px;background:#ece9d8;border:1px solid #404040;border-top:none;border-left-color:#fff"></div>
<div class="t" style="left:215.5px;top:563.3px;font-size:8.7px;letter-spacing:-0.461px;">Dialog</div>
<div class="t" style="left:287px;top:564.8px;font-size:8.7px;letter-spacing:-0.461px;">Grid</div>
<div class="t" style="left:347.5px;top:563.3px;font-size:8.7px;letter-spacing:-0.461px;">Diagram</div>
<div class="t" style="left:420px;top:563.3px;font-size:8.7px;letter-spacing:-0.461px;">Chart</div>
<div class="t" style="left:486px;top:563.3px;font-size:8.7px;letter-spacing:-0.461px;">Result</div>
<svg class="a" style="left:188px;top:562px" width="12" height="12" viewBox="0 0 12 12" preserveAspectRatio="none"><rect x="0.5" y="0.5" width="11" height="11" fill="#fff" stroke="#111"/><rect x="0.5" y="0.5" width="11" height="2.5" fill="#1a2a9a"/><path d="M2 5.5 H8 M2 7.5 H8 M2 9.5 H8" stroke="#111" stroke-width="1"/><rect x="9" y="4" width="2" height="7" fill="#666"/></svg>
<svg class="a" style="left:255px;top:563px" width="12" height="12" viewBox="0 0 12 12" preserveAspectRatio="none"><rect x="0.5" y="0.5" width="11" height="11" fill="#d8f0ec" stroke="#0a5a5a"/><path d="M4 0 V12 M8 0 V12 M0 4 H12 M0 8 H12" stroke="#0a5a5a" stroke-width="1.2"/></svg>
<svg class="a" style="left:323.4px;top:562px" width="13" height="12" viewBox="0 0 13 12" preserveAspectRatio="none"><rect x="3.5" y="0.6" width="6" height="3.6" rx="1" fill="#30c0c0" stroke="#0a4a4a"/><rect x="0.6" y="3.6" width="11.8" height="5" rx="2.2" fill="#30c0c0" stroke="#0a4a4a"/><rect x="3.5" y="7.8" width="6" height="3.6" rx="1" fill="#30c0c0" stroke="#0a4a4a"/><rect x="4" y="4.6" width="5" height="2.8" fill="#e8ffff"/></svg>
<svg class="a" style="left:390.6px;top:562px" width="12" height="12" viewBox="0 0 12 12" preserveAspectRatio="none"><rect x="0" y="0.5" width="1.2" height="11.5" fill="#111"/><rect x="1.4" y="1" width="3.2" height="10" fill="#d81818"/><rect x="4.6" y="4.5" width="3" height="6.5" fill="#28a828"/><rect x="6" y="3.5" width="1.6" height="7.5" fill="#c8c020"/><rect x="7.6" y="2" width="3.4" height="9" fill="#2038c8"/><rect x="0" y="11" width="12" height="1" fill="#222"/></svg>
<svg class="a" style="left:458px;top:562px" width="12" height="12" viewBox="0 0 12 12" preserveAspectRatio="none"><rect x="0.5" y="0.5" width="11" height="11" fill="#e8e8f0" stroke="#222"/><rect x="1" y="8.5" width="10" height="2.5" fill="#555"/><path d="M1.5 8 L4 3 L6 5.5 L10.5 1.5 L10.5 5 L7 8.5 L5 7 L3 9 Z" fill="#d81818"/></svg>
<div class="a" style="left:0px;top:582px;width:768px;height:1px;background:#d8d4c0;"></div>
<div class="a" style="left:495px;top:584px;width:80px;height:12px;border:1px solid;border-color:#aca899 #fff #fff #aca899"></div>
<div class="a" style="left:577px;top:584px;width:80px;height:12px;border:1px solid;border-color:#aca899 #fff #fff #aca899"></div>
<div class="a" style="left:659px;top:584px;width:42px;height:12px;border:1px solid;border-color:#aca899 #fff #fff #aca899"></div>
<div class="a" style="left:702px;top:584px;width:20px;height:12px;border:1px solid;border-color:#aca899 #fff #fff #aca899"></div>
<div class="a" style="left:723px;top:584px;width:21px;height:12px;border:1px solid;border-color:#aca899 #fff #fff #aca899"></div>
<div class="a" style="left:745px;top:584px;width:22px;height:12px;border:1px solid;border-color:#aca899 #fff #fff #aca899"></div>
<div class="t" style="left:497.5px;top:584.8px;font-size:7.9px;">Blocks: 29</div>
<div class="t" style="left:579px;top:584.8px;font-size:7.9px;">Comps: 114</div>
<div class="t" style="left:725.5px;top:584.8px;font-size:7.6px;">NUM</div>
<div class="a" style="left:0px;top:593px;width:768px;height:1px;background:#b4c6e6;"></div>
<div class="a" style="left:0px;top:594px;width:768px;height:1px;background:#5a88d8;"></div>
<div class="a" style="left:0px;top:595px;width:768px;height:1px;background:#2a62cc;"></div>
</div></body></html>
